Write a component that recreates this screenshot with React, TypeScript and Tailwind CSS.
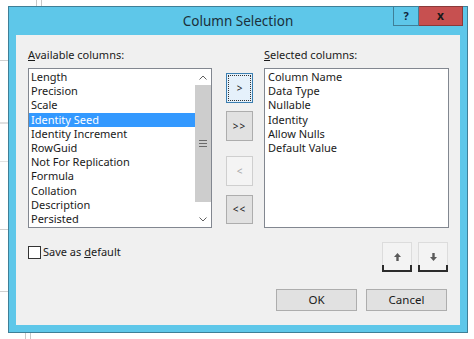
import React from "react";

const available = [
  "Length",
  "Precision",
  "Scale",
  "Identity Seed",
  "Identity Increment",
  "RowGuid",
  "Not For Replication",
  "Formula",
  "Collation",
  "Description",
  "Persisted",
];

const selected = ["Column Name", "Data Type", "Nullable", "Identity", "Allow Nulls", "Default Value"];

const font = { fontFamily: '"Noto Sans", "Open Sans", sans-serif' };

// small bracketed buttons for moving a column up / down
const MoveButton = ({ dir }: { dir: "up" | "down" }) => (
  <div className="relative w-[30px] h-[30px] bg-[#f3f3f3] border border-[#dcdcdc] flex items-center justify-center">
    <svg width="9" height="10" viewBox="0 0 9 10">
      {dir === "up" ? (
        <path d="M4.5 1 L8 5 H5.7 V9 H3.3 V5 H1 Z" fill="#5a5a5a" />
      ) : (
        <path d="M4.5 9 L8 5 H5.7 V1 H3.3 V5 H1 Z" fill="#5a5a5a" />
      )}
    </svg>
    <span className="absolute left-[-1px] right-[-1px] bottom-[-1px] h-[2px] bg-[#2b2b2b]" />
    <span className="absolute left-[-1px] bottom-[-1px] w-[2px] h-[7px] bg-[#2b2b2b]" />
    <span className="absolute right-[-1px] bottom-[-1px] w-[2px] h-[7px] bg-[#2b2b2b]" />
  </div>
);

export default function App() {
  return (
    <div className="relative w-[474px] h-[339px] bg-white overflow-hidden" style={font}>
      {/* stuff behind the dialog */}
      <div className="absolute left-0 top-[60px] w-[8px] h-px bg-[#d0d0d0]" />
      <div className="absolute left-0 top-[122px] w-[8px] h-[2px] bg-[#e0e0e0]" />
      <div className="absolute left-0 top-[161px] w-[8px] h-px bg-[#e2e2e2]" />
      <div className="absolute left-0 top-[229px] w-[8px] h-px bg-[#d0d0d0]" />
      <div className="absolute left-0 top-[291px] w-[8px] h-px bg-[#d0d0d0]" />
      <div className="absolute left-[36px] top-0 w-px h-[6px] bg-[#c8c8c8]" />
      <div className="absolute left-[41px] top-0 w-px h-[6px] bg-[#c8c8c8]" />
      <div className="absolute left-[25px] top-[333px] w-px h-[6px] bg-[#c8c8c8]" />
      <div className="absolute left-[30px] top-[333px] w-px h-[6px] bg-[#c8c8c8]" />

      <div className="pt-[6px] pl-[8px]">
        <div className="w-[460px] h-[327px] bg-[#5ec7e9] border border-[#3f7f97] flex flex-col">
          {/* title bar */}
          <div className="relative h-[28px] flex items-center justify-center">
            <span className="text-[13.5px] text-[#1b2f3a] mt-[1px]">Column Selection</span>
            <div className="absolute top-[-1px] right-[4px] flex">
              <div className="w-[26px] h-[20px] border border-[#3f7f97] flex items-center justify-center text-[11px] font-bold text-[#10253a]">
                ?
              </div>
              <div className="w-[44px] h-[20px] bg-[#c75050] border border-[#8a3a3a] border-l-0 flex items-center justify-center text-[12px] font-bold text-[#1a1a1a]">
                x
              </div>
            </div>
          </div>

          {/* client area */}
          <div className="mx-[7px] bg-[#f0f0f0] h-[290px] text-[11px] text-[#1a1a1a]">
            <div className="flex pt-[12px] pl-[12px] h-[33px]">
              <div className="w-[236px] leading-[15px]">
                <span className="underline">A</span>vailable columns:
              </div>
              <div className="leading-[15px]">
                <span className="underline">S</span>elected columns:
              </div>
            </div>

            <div className="flex pl-[12px]">
              {/* available list */}
              <div className="w-[184px] h-[160px] bg-white border border-[#828790] flex">
                <div className="flex-1 pt-[1px]">
                  {available.map((item) => (
                    <div
                      key={item}
                      className={
                        item === "Identity Seed"
                          ? "h-[14.2px] leading-[14px] pl-[2px] bg-[#3399ff] text-white"
                          : "h-[14.2px] leading-[14px] pl-[2px]"
                      }
                    >
                      {item}
                    </div>
                  ))}
                </div>
                <div className="w-[16px] flex flex-col">
                  <div className="h-[16px] flex items-center justify-center">
                    <svg width="8" height="5" viewBox="0 0 8 5">
                      <path d="M0.5 4.5 L4 1 L7.5 4.5" stroke="#606060" fill="none" />
                    </svg>
                  </div>
                  <div className="h-[117px] bg-[#cdcdcd] flex items-center justify-center">
                    <svg width="8" height="7" viewBox="0 0 8 7">
                      <path d="M0 0.5 H8 M0 3.5 H8 M0 6.5 H8" stroke="#6a6a6a" />
                    </svg>
                  </div>
                  <div className="flex-1" />
                  <div className="h-[16px] flex items-center justify-center">
                    <svg width="8" height="5" viewBox="0 0 8 5">
                      <path d="M0.5 0.5 L4 4 L7.5 0.5" stroke="#606060" fill="none" />
                    </svg>
                  </div>
                </div>
              </div>

              {/* move buttons */}
              <div className="ml-[14px] w-[27px] pt-[5px] flex flex-col">
                <div className="h-[30px] bg-[#e5f1fb] border border-[#3c7fb1] p-[1px]">
                  <div className="h-full border border-dotted border-[#333] flex items-center justify-center text-[10px]">
                    &gt;
                  </div>
                </div>
                <div className="mt-[8px] h-[30px] bg-[#e1e1e1] border border-[#adadad] flex items-center justify-center text-[10px] tracking-[1px]">
                  &gt;&gt;
                </div>
                <div className="mt-[15px] h-[30px] bg-[#f4f4f4] border border-[#cfcfcf] flex items-center justify-center text-[10px] text-[#a8a8a8]">
                  &lt;
                </div>
                <div className="mt-[9px] h-[29px] bg-[#e1e1e1] border border-[#adadad] flex items-center justify-center text-[10px] tracking-[1px]">
                  &lt;&lt;
                </div>
              </div>

              {/* selected list */}
              <div className="ml-[11px] w-[185px] h-[160px] bg-white border border-[#828790] pt-[1px]">
                {selected.map((item) => (
                  <div key={item} className="h-[14.2px] leading-[14px] pl-[3px]">
                    {item}
                  </div>
                ))}
              </div>
            </div>

            {/* checkbox + up/down */}
            <div className="flex items-start pl-[12px] pr-[12px] mt-[14px]">
              <div className="flex items-center mt-[3px]">
                <div className="w-[13px] h-[13px] bg-white border border-[#333]" />
                <span className="ml-[2px] leading-[14px]">
                  Save as <span className="underline">d</span>efault
                </span>
              </div>
              <div className="ml-auto flex gap-[6px]">
                <MoveButton dir="up" />
                <MoveButton dir="down" />
              </div>
            </div>

            {/* OK / Cancel */}
            <div className="flex justify-end gap-[9px] pr-[13px] mt-[17px]">
              <div className="w-[81px] h-[22px] bg-[#e1e1e1] border border-[#adadad] flex items-center justify-center text-[11.5px]">
                OK
              </div>
              <div className="w-[81px] h-[22px] bg-[#e1e1e1] border border-[#adadad] flex items-center justify-center text-[11.5px]">
                Cancel
              </div>
            </div>
          </div>
        </div>
      </div>
    </div>
  );
}
